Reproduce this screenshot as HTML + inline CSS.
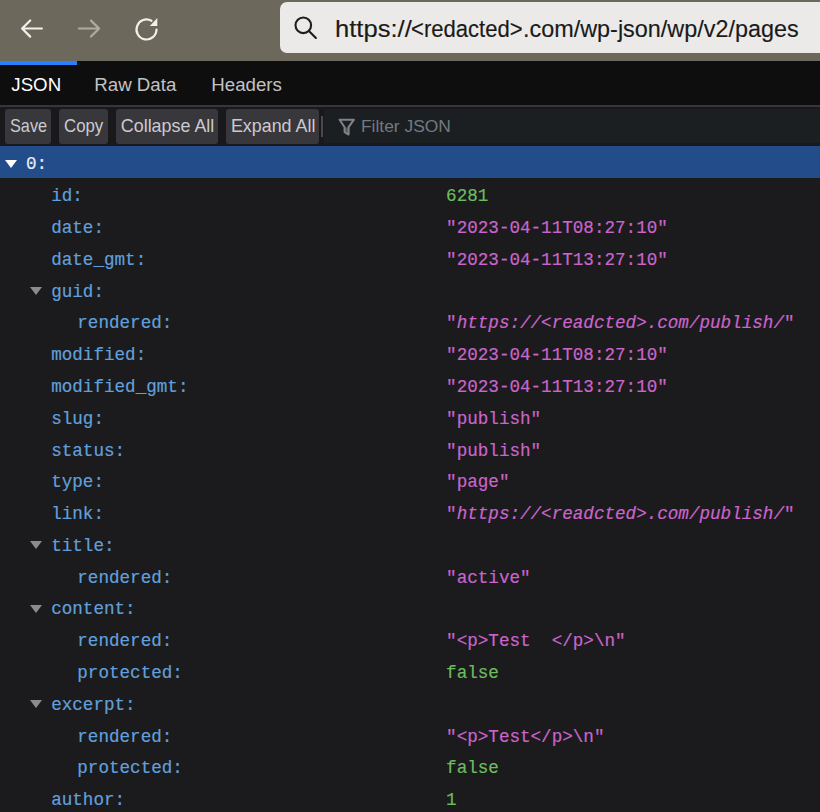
<!DOCTYPE html>
<html><head><meta charset="utf-8">
<style>
html,body{margin:0;padding:0;}
body{width:820px;height:812px;overflow:hidden;position:relative;background:#1b1b1d;font-family:"Liberation Sans",sans-serif;}
.abs{position:absolute;}
#top{position:absolute;left:0;top:0;width:820px;height:61px;background:#6d685c;}
#url{position:absolute;left:280px;top:2px;width:560px;height:51px;background:#ebeae8;border-radius:7px;}
.ut{position:absolute;top:17px;font-size:23.4px;color:#1a1a1a;white-space:pre;line-height:1;-webkit-text-stroke:0.15px #1a1a1a;transform:scaleY(1.04);transform-origin:0 0;}
#tabs{position:absolute;left:0;top:61px;width:820px;height:43.7px;background:#0e0e0f;}
#ind{position:absolute;left:0;top:61px;width:76.5px;height:3.6px;background:#2680ff;}
.tab{position:absolute;top:0;font-size:18.7px;color:#c2c2c5;white-space:pre;line-height:1;}
#tline{position:absolute;left:0;top:104.7px;width:820px;height:2px;background:#37373b;}
#tool{position:absolute;left:0;top:106.7px;width:820px;height:40px;background:#19191b;}
.btn{position:absolute;top:109.2px;height:34.5px;background:#38373c;border-radius:3px;}
.bt{position:absolute;font-size:17.9px;color:#cbcbcf;white-space:pre;line-height:1;}
#sep{position:absolute;left:321px;top:115.7px;width:1.5px;height:21.5px;background:#4a4a4f;}
#filter{position:absolute;left:324px;top:109.2px;width:500px;height:34.3px;background:#1b1f22;}
.sel{position:absolute;left:0;width:820px;height:32.1px;background:#234d8a;}
.tri{position:absolute;width:0;height:0;border-left:6.7px solid transparent;border-right:6.7px solid transparent;border-top:8.2px solid #8c8c8c;}
.tri.w{border-top-color:#ffffff;}
.k,.v{position:absolute;font-family:"Liberation Mono",monospace;font-size:17.6px;white-space:pre;line-height:normal;-webkit-text-stroke:0.18px currentColor;}
.k{color:#62a0dc;}
.k.w{color:#e8eef8;}
.s{color:#cc64cc;}
.n{color:#6cbd5e;}
.v i{font-style:italic;}
</style></head><body>
<div id="top"></div>
<svg class="abs" style="left:0;top:0" width="280" height="60" viewBox="0 0 280 60">
 <g fill="none" stroke="#f2f0eb" stroke-width="2.2" stroke-linecap="round" stroke-linejoin="round">
  <path d="M22.1 28.5 H41.9 M30.2 20.5 L22.1 28.5 L30.2 36.6"/>
 </g>
 <g fill="none" stroke="#aeaba3" stroke-width="2.2" stroke-linecap="round" stroke-linejoin="round">
  <path d="M78.9 28.5 H99.1 M91 20.6 L99.1 28.5 L91 36.5"/>
 </g>
 <g fill="none" stroke="#f2f0eb" stroke-width="2.2" stroke-linecap="round">
  <path d="M156.5 29.5 A10 10 0 1 1 151.5 20.8"/>
 </g>
 <path d="M157.3 17.9 L157.3 26 L149.8 26 Z" fill="#f2f0eb"/>
</svg>
<div id="url"></div>
<svg class="abs" style="left:280px;top:0" width="60" height="60" viewBox="280 0 60 60">
 <g fill="none" stroke="#1e1e1e" stroke-width="2.1" stroke-linecap="round">
  <circle cx="303.3" cy="25.3" r="7.8"/>
  <path d="M308.9 30.9 L315.9 37.9"/>
 </g>
</svg>
<div class="ut" style="left:334.5px;transform:scaleX(1.094) scaleY(1.04)">https://</div><div class="ut" style="left:411.3px;transform:scaleX(0.943) scaleY(1.04)">&lt;redacted&gt;</div><div class="ut" style="left:523px">.com/wp-json/wp/v2/pages</div>
<div id="tabs"></div>
<div id="ind"></div>
<div class="tab" style="left:11.3px;top:75.5px;color:#ffffff">JSON</div>
<div class="tab" style="left:94.3px;top:75.5px">Raw Data</div>
<div class="tab" style="left:211.3px;top:75.5px">Headers</div>
<div id="tline"></div>
<div id="tool"></div>
<div class="btn" style="left:5px;width:45.8px"></div>
<div class="btn" style="left:59.2px;width:49px"></div>
<div class="btn" style="left:116.3px;width:101.6px"></div>
<div class="btn" style="left:226.1px;width:93.4px"></div>
<div class="bt" style="left:9.5px;top:118.3px;transform:scaleX(0.91);transform-origin:0 0">Save</div>
<div class="bt" style="left:64px;top:118.3px;transform:scaleX(0.94);transform-origin:0 0">Copy</div>
<div class="bt" style="left:120.8px;top:118.3px">Collapse All</div>
<div class="bt" style="left:230.9px;top:118.3px">Expand All</div>
<div id="sep"></div>
<div id="filter"></div>
<svg class="abs" style="left:330px;top:110px" width="40" height="32" viewBox="330 110 40 32">
 <path d="M344.6 127.5 H348.6 V134.6 L344.6 132.2 Z" fill="#505357"/><path d="M339.6 119.7 H353.9 L348.6 127.2 V134.6 L344.6 132.2 V127.2 Z" fill="none" stroke="#808387" stroke-width="2" stroke-linejoin="round"/>
</svg>
<div class="bt" style="left:361px;top:118.3px;color:#747980;font-size:17.4px">Filter JSON</div>
<div class="sel" style="top:146.3px"></div><div class="tri w" style="left:4.80px;top:159.80px"></div><div class="k w" style="left:26.00px;top:154.40px">0:</div><div class="k" style="left:51.20px;top:186.19px">id:</div><div class="v n" style="left:446.10px;top:186.19px">6281</div><div class="k" style="left:51.20px;top:217.98px">date:</div><div class="v s" style="left:446.10px;top:217.98px">"2023-04-11T08:27:10"</div><div class="k" style="left:51.20px;top:249.77px">date_gmt:</div><div class="v s" style="left:446.10px;top:249.77px">"2023-04-11T13:27:10"</div><div class="tri" style="left:30.00px;top:286.96px"></div><div class="k" style="left:51.20px;top:281.56px">guid:</div><div class="k" style="left:77.30px;top:313.35px">rendered:</div><div class="v s" style="left:446.10px;top:313.35px">"<i>https://&lt;readcted&gt;.com/publish/</i>"</div><div class="k" style="left:51.20px;top:345.14px">modified:</div><div class="v s" style="left:446.10px;top:345.14px">"2023-04-11T08:27:10"</div><div class="k" style="left:51.20px;top:376.93px">modified_gmt:</div><div class="v s" style="left:446.10px;top:376.93px">"2023-04-11T13:27:10"</div><div class="k" style="left:51.20px;top:408.72px">slug:</div><div class="v s" style="left:446.10px;top:408.72px">"publish"</div><div class="k" style="left:51.20px;top:440.51px">status:</div><div class="v s" style="left:446.10px;top:440.51px">"publish"</div><div class="k" style="left:51.20px;top:472.30px">type:</div><div class="v s" style="left:446.10px;top:472.30px">"page"</div><div class="k" style="left:51.20px;top:504.09px">link:</div><div class="v s" style="left:446.10px;top:504.09px">"<i>https://&lt;readcted&gt;.com/publish/</i>"</div><div class="tri" style="left:30.00px;top:541.28px"></div><div class="k" style="left:51.20px;top:535.88px">title:</div><div class="k" style="left:77.30px;top:567.67px">rendered:</div><div class="v s" style="left:446.10px;top:567.67px">"active"</div><div class="tri" style="left:30.00px;top:604.86px"></div><div class="k" style="left:51.20px;top:599.46px">content:</div><div class="k" style="left:77.30px;top:631.25px">rendered:</div><div class="v s" style="left:446.10px;top:631.25px">"&lt;p&gt;Test  &lt;/p&gt;\n"</div><div class="k" style="left:77.30px;top:663.04px">protected:</div><div class="v n" style="left:446.10px;top:663.04px">false</div><div class="tri" style="left:30.00px;top:700.23px"></div><div class="k" style="left:51.20px;top:694.83px">excerpt:</div><div class="k" style="left:77.30px;top:726.62px">rendered:</div><div class="v s" style="left:446.10px;top:726.62px">"&lt;p&gt;Test&lt;/p&gt;\n"</div><div class="k" style="left:77.30px;top:758.41px">protected:</div><div class="v n" style="left:446.10px;top:758.41px">false</div><div class="k" style="left:51.20px;top:790.20px">author:</div><div class="v n" style="left:446.10px;top:790.20px">1</div>
</body></html>
